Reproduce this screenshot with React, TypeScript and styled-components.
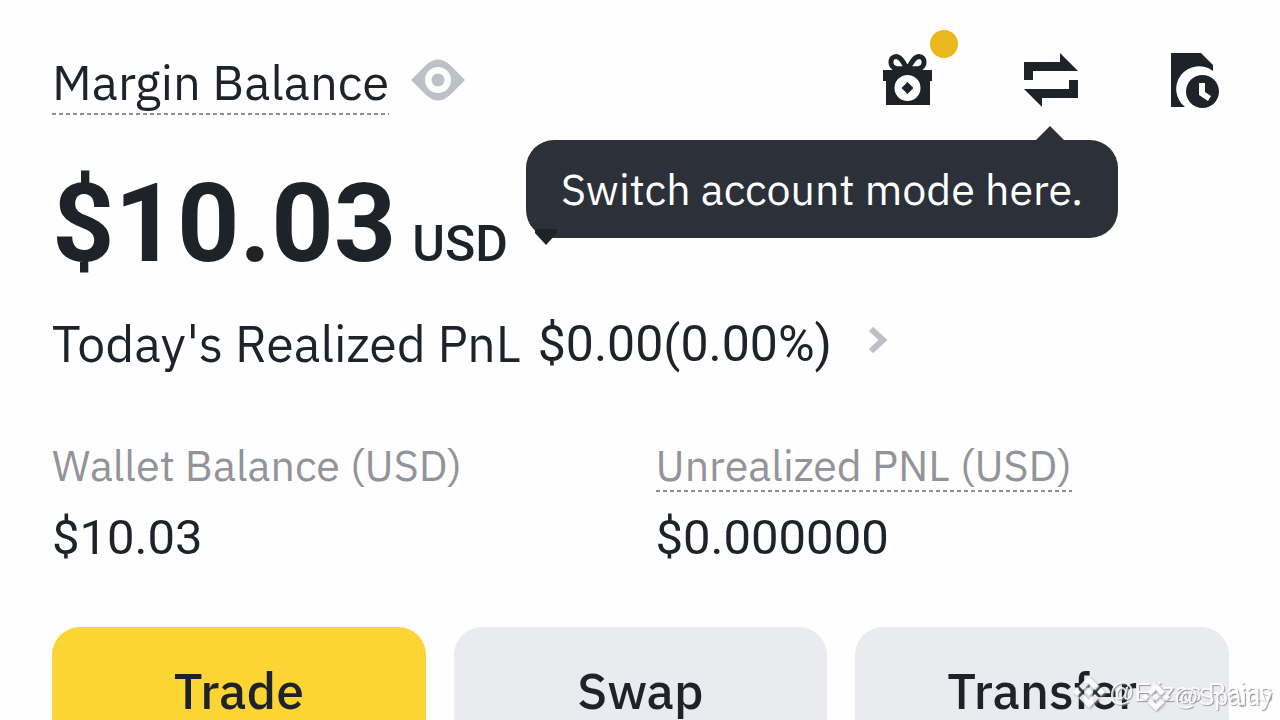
import React from "react";
import styled, { createGlobalStyle } from "styled-components";

const ink = "#1e2329";
const labelFont = `"IBM Plex Sans", "Noto Sans", sans-serif`;
const numberFont = `Roboto, "Liberation Sans", sans-serif`;

const GlobalStyle = createGlobalStyle`
  * { box-sizing: border-box; }
  body { margin: 0; background: #fefefe; color: ${ink}; font-family: ${labelFont}; }
  button { font: inherit; color: inherit; border: 0; padding: 0; background: none; cursor: pointer; }
  h1, h2, p, dl, dt, dd { margin: 0; font-weight: 400; }
`;

const Page = styled.main`
  position: relative;
  height: 100vh;
  overflow: hidden;
  padding: 44px 51px 0 52px;
`;

const Header = styled.header`
  display: flex;
  align-items: center;
  justify-content: space-between;
  height: 72px;
`;

const TitleGroup = styled.div`
  display: flex;
  align-items: center;
  gap: 22px;
`;

const Hint = styled.span`
  display: inline-block;
  vertical-align: top;
  background: repeating-linear-gradient(90deg, #8d8f9b 0 4px, transparent 4px 7px) bottom / 100% 2px no-repeat;
`;

const Title = styled.h1`
  padding-top: 4px;
  font-size: 49px;
  line-height: 66px;
`;

const IconButton = styled.button`
  position: relative;
  display: flex;
`;

const Actions = styled.div`
  display: flex;
  align-items: center;
  gap: 92px;
  padding-right: 5px;
`;

const Anchor = styled.div`
  position: relative;
`;

const Badge = styled.span`
  position: absolute;
  top: -23px;
  right: -26px;
  width: 28px;
  height: 28px;
  border-radius: 50%;
  background: #ebb91b;
`;

const Tooltip = styled.div`
  position: absolute;
  z-index: 1;
  top: 87px;
  right: -40px;
  padding: 0 35px;
  border-radius: 28px;
  background: #2b3039;
  color: #fefefe;
  font-size: 43px;
  line-height: 98px;
  white-space: nowrap;
`;

const Pointer = styled.svg<{ $place: "top" | "bottom" }>`
  position: absolute;
  ${({ $place }) => ($place === "top" ? "top: -14px; right: 53px;" : "bottom: -7px; left: 8px;")}
`;

const Total = styled.p`
  display: flex;
  align-items: baseline;
  gap: 16px;
  margin-top: 42px;
  font-family: ${numberFont};
  font-size: 109px;
  font-weight: 700;
  line-height: 132px;
`;

const Unit = styled.span`
  font-size: 50px;
  font-weight: 500;
  line-height: 60px;
`;

const Realized = styled.div`
  display: flex;
  align-items: center;
  gap: 17px;
  margin-top: 22px;
  font-size: 50px;
  line-height: 64px;
`;

const Figure = styled.span`
  font-family: ${numberFont};
`;

const Stats = styled.dl`
  display: grid;
  grid-template-columns: 1fr 1fr;
  gap: 30px;
  margin-top: 62px;
`;

const StatLabel = styled.dt`
  color: #929499;
  font-size: 43px;
  line-height: 54px;
`;

const StatValue = styled.dd`
  && { margin-top: 12px; }
  font-family: ${numberFont};
  font-size: 49px;
  line-height: 68px;
`;

const Buttons = styled.div`
  display: grid;
  grid-template-columns: repeat(3, 1fr);
  gap: 28px;
  margin-top: 55px;
`;

const ActionButton = styled.button<{ $primary?: boolean }>`
  height: 126px;
  border-radius: 28px;
  && {
    background: ${({ $primary }) => ($primary ? "#fcd535" : "#eaebef")};
    font-size: 50px;
    font-weight: 500;
  }
`;

const Watermark = styled.div<{ $front?: boolean }>`
  position: absolute;
  right: 8px;
  bottom: ${({ $front }) => ($front ? 6 : 11)}px;
  display: flex;
  align-items: center;
  gap: 4px;
  color: #fefefe;
  font-family: "Liberation Sans", sans-serif;
  font-size: ${({ $front }) => ($front ? 24 : 25)}px;
  line-height: 34px;
  text-shadow: 1px 1px 1px #8f9196;
  opacity: 0.9;
  svg { filter: drop-shadow(1px 1px 1px #8f9196); }
`;

const Diamonds = ({ size }: { size: number }) => (
  <svg width={size} height={size} viewBox="0 0 32 32" fill="currentColor" aria-hidden="true">
    <path d="M16 0l10 10-4 4-6-6-6 6-4-4zM16 32l10-10-4-4-6 6-6-6-4 4zM4 12l4 4-4 4-4-4zM28 12l4 4-4 4-4-4zM16 12l4 4-4 4-4-4z" />
  </svg>
);

export default function App() {
  return (
    <>
      <GlobalStyle />
      <Page>
        <Header>
          <TitleGroup>
            <Title><Hint>Margin Balance</Hint></Title>
            <IconButton aria-label="Hide balance">
              <svg width="54" height="42" viewBox="0 0 54 42">
                <path fill="#bdc0c6" fillRule="evenodd" d="M0 21L15 6Q27-5 39 6L54 21 39 36Q27 47 15 36ZM27 8a13 13 0 1 0 0 26a13 13 0 1 0 0-26Z" />
                <circle cx="27" cy="21" r="6.500" fill="#bdc0c6" />
              </svg>
            </IconButton>
          </TitleGroup>
          <Actions>
            <IconButton aria-label="Rewards">
              <svg width="49" height="54" viewBox="1 0 49 54" fill={ink}>
                <path fill="none" stroke={ink} strokeWidth="5" d="M25.500 16C22 11 19 3.500 14 3.500C7.500 3.500 7 14 14 15.500ZM25.500 16C29 11 32 3.500 37 3.500C43.500 3.500 44 14 37 15.500Z" />
                <path fillRule="evenodd" d="M1 17H50V28H48V52H4V28H1ZM25.500 22a13 13 0 1 0 0 26a13 13 0 1 0 0-26Z" />
                <path d="M25.500 29l6 6-6 6-6-6Z" />
              </svg>
              <Badge />
            </IconButton>
            <Anchor>
              <IconButton aria-label="Switch account mode">
                <svg width="54" height="54" viewBox="0 0 54 54" fill={ink}>
                  <path d="M0 9H36V0L54 18H9V27H0ZM54 45H18V54L0 36H45V27H54Z" />
                </svg>
              </IconButton>
              <Tooltip role="tooltip">
                <Pointer $place="top" width="30" height="15" viewBox="0 0 30 15"><path fill="#2b3039" d="M15 0l15 15H0Z" /></Pointer>
                Switch account mode here.
                <Pointer $place="bottom" width="24" height="16" viewBox="0 0 24 16"><path fill={ink} d="M1 0H23V4L12 16 1 4Z" /></Pointer>
              </Tooltip>
            </Anchor>
            <IconButton aria-label="History">
              <svg width="54" height="58" viewBox="0 0 54 58" fill={ink}>
                <path d="M1 2H31L43 14V20A22 22 0 0 0 15 56H1Z" />
                <path fillRule="evenodd" d="M32.500 24a16.500 16.500 0 1 0 0 33a16.500 16.500 0 1 0 0-33ZM29 32H35V41L41 45 38 50 29 44Z" />
              </svg>
            </IconButton>
          </Actions>
        </Header>

        <Total>$10.03<Unit>USD</Unit></Total>

        <Realized>
          <span>Today's Realized PnL</span>
          <Figure>$0.00(0.00%)</Figure>
          <IconButton aria-label="Realized PnL details">
            <svg width="56" height="34" viewBox="0 0 56 34"><path d="M22 2L34 13 22 24" fill="none" stroke="#bdc0c6" strokeWidth="6" /></svg>
          </IconButton>
        </Realized>

        <Stats>
          <div>
            <StatLabel>Wallet Balance (USD)</StatLabel>
            <StatValue>$10.03</StatValue>
          </div>
          <div>
            <StatLabel><Hint>Unrealized PNL (USD)</Hint></StatLabel>
            <StatValue>$0.000000</StatValue>
          </div>
        </Stats>

        <Buttons>
          <ActionButton $primary>Trade</ActionButton>
          <ActionButton>Swap</ActionButton>
          <ActionButton>Transfer</ActionButton>
        </Buttons>

        <Watermark><Diamonds size={32} />@Elizas Rajas</Watermark>
        <Watermark $front><Diamonds size={28} />@Spaidy</Watermark>
      </Page>
    </>
  );
}
